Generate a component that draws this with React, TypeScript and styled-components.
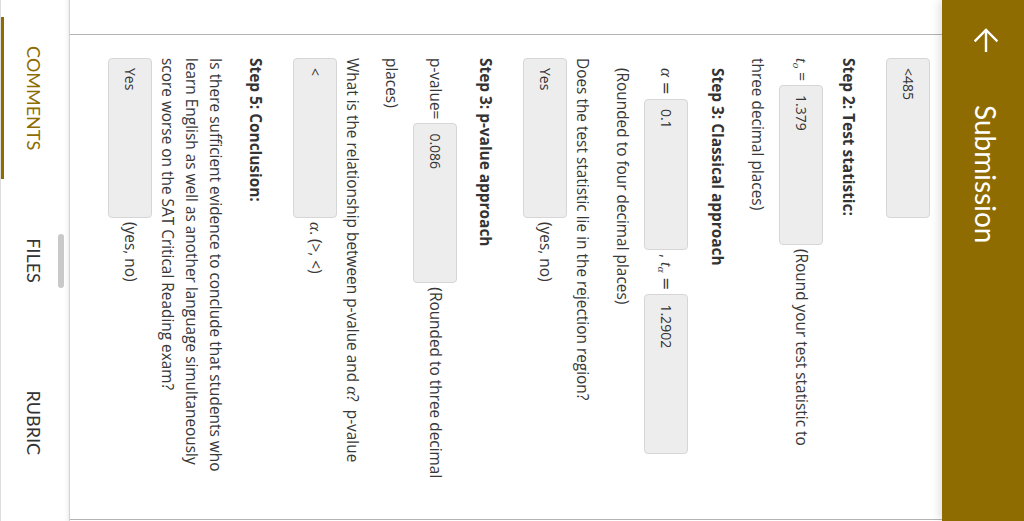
import React from 'react';
import styled, { createGlobalStyle } from 'styled-components';

const GOLD = '#8e6c02';

const GlobalStyle = createGlobalStyle`
  html, body {
    margin: 0;
    padding: 0;
    background: #fff;
  }
`;

const Frame = styled.div`
  width: 1024px;
  height: 521px;
  overflow: hidden;
`;

// the phone screen is portrait, the screenshot shows it turned a quarter clockwise
const Screen = styled.div`
  width: 521px;
  height: 1024px;
  transform-origin: 0 0;
  transform: translateX(1024px) rotate(90deg);
  display: flex;
  flex-direction: column;
  background: #fff;
  font-family: 'Open Sans', sans-serif;
  color: #383838;
`;

const Header = styled.header`
  flex: none;
  height: 82px;
  box-sizing: border-box;
  padding: 0 0 6px 28px;
  display: flex;
  align-items: center;
  background: ${GOLD};
  color: #fff;
  box-shadow: 0 2px 9px rgba(0, 0, 0, 0.14);
  position: relative;
  z-index: 1;
`;

const Title = styled.h1`
  margin: 0 0 0 53px;
  font: 400 28px/1 Lato, sans-serif;
`;

const Body = styled.main`
  flex: 1;
  min-height: 0;
  overflow: hidden;
  padding-left: 34px;
`;

const Panel = styled.div`
  width: 486px;
  height: 100%;
  box-sizing: border-box;
  border-left: 1px solid #b3b3b3;
  border-right: 1px solid #b3b3b3;
  padding: 9px 10px 0 23px;
`;

const Section = styled.div<{ $indent?: number }>`
  padding-left: ${p => p.$indent ?? 0}px;
`;

const Heading = styled.h3`
  margin: 16px 0 0;
  font-size: 15.4px;
  font-weight: 700;
  line-height: 24px;
  white-space: nowrap;
  color: #333;
`;

const Para = styled.p<{ $top?: number }>`
  margin: ${p => p.$top ?? 14}px 0 0;
  font-size: 15.4px;
  line-height: 24px;
  white-space: nowrap;
`;

const Field = styled.span<{ $w?: number }>`
  display: inline-block;
  box-sizing: border-box;
  width: ${p => p.$w ?? 160}px;
  height: 44px;
  margin: 3px 0 10px;
  padding: 0 9px;
  background: #ededed;
  border: 1px solid #d6d6d6;
  border-radius: 4px;
  font-size: 14px;
  line-height: 42px;
  color: #333;
  vertical-align: baseline;
`;

const MathVar = styled.span`
  font-family: 'Liberation Serif', serif;
  font-style: italic;
  font-size: 17px;
`;

// TeX relation: glyph with a thick space on each side
const MathEq = styled.span`
  display: inline-block;
  width: 13px;
  margin: 0 4.5px;
  text-align: center;
  font-family: 'DejaVu Serif', serif;
  font-size: 16px;
`;

const Sub = styled.sub`
  font-size: 11px;
  line-height: 0;
  vertical-align: -3px;
`;

const Sheet = styled.nav`
  flex: none;
  height: 70px;
  box-sizing: border-box;
  border-top: 1px solid #d2d2d2;
  border-bottom: 1px solid #dcdcdc;
  display: flex;
  flex-direction: column;
  align-items: center;
  background: #fff;
  box-shadow: inset 0 6px 5px -5px rgba(0, 0, 0, 0.09);
`;

const Handle = styled.div`
  width: 54px;
  height: 6px;
  margin-top: 5px;
  border-radius: 3px;
  background: #c9c9c9;
`;

const TabRow = styled.div`
  align-self: stretch;
  flex: 1;
  display: flex;
  padding: 0 17px;
`;

const Tab = styled.div<{ $active?: boolean }>`
  flex: 1;
  display: flex;
  align-items: center;
  justify-content: center;
  padding-bottom: 6px;
  border-bottom: 3px solid ${p => (p.$active ? GOLD : 'transparent')};
  font: 400 18px Lato, sans-serif;
  text-transform: uppercase;
  color: ${p => (p.$active ? GOLD : '#333')};
`;

const BackArrow = () => (
  <svg width="24" height="24" viewBox="0 0 24 24" fill="none" stroke="#fff" strokeWidth="2.4" strokeLinecap="square">
    <path d="M23 12H2.5" />
    <path d="M12.5 1.5 2 12l10.5 10.5" />
  </svg>
);

const App = () => (
  <Frame>
    <GlobalStyle />
    <Screen>
      <Header>
        <BackArrow />
        <Title>Submission</Title>
      </Header>

      <Body>
        <Panel>
          <Para $top={0}>
            <Field>&lt;485</Field>
          </Para>

          <Heading>Step 2: Test statistic:</Heading>
          <Para $top={10}>
            <MathVar>t<Sub>o</Sub></MathVar> = <Field>1.379</Field> (Round your test statistic to
            <br />
            three decimal places)
          </Para>

          <Section $indent={10}>
            <Heading>Step 3: Classical approach</Heading>
            <Para>
              <MathVar>α</MathVar>
              <MathEq>=</MathEq>
              <Field $w={151}>0.1</Field> , <MathVar>t<Sub>α</Sub></MathVar>
              <MathEq>=</MathEq>
              <Field>1.2902</Field>
              <br />
              (Rounded to four decimal places)
            </Para>
          </Section>

          <Para $top={16}>
            Does the test statistic lie in the rejection region?
            <br />
            <Field>Yes</Field> (yes, no)
          </Para>

          <Heading>Step 3: p-value approach</Heading>
          <Para $top={13}>
            p-value= <Field>0.086</Field> (Rounded to three decimal
            <br />
            places)
          </Para>

          <Para $top={15}>
            What is the relationship between p-value and <MathVar>α</MathVar>? &nbsp;p-value
            <br />
            <Field>&lt;</Field> <MathVar>α</MathVar>. (&gt;, &lt;)
          </Para>

          <Heading>Step 5: Conclusion:</Heading>
          <Para $top={16}>
            Is there sufficient evidence to conclude that students who
            <br />
            learn English as well as another language simultaneously
            <br />
            score worse on the SAT Critical Reading exam?
            <br />
            <Field>Yes</Field> (yes, no)
          </Para>
        </Panel>
      </Body>

      <Sheet>
        <Handle />
        <TabRow>
          <Tab $active>Comments</Tab>
          <Tab>Files</Tab>
          <Tab>Rubric</Tab>
        </TabRow>
      </Sheet>
    </Screen>
  </Frame>
);

export default App;
